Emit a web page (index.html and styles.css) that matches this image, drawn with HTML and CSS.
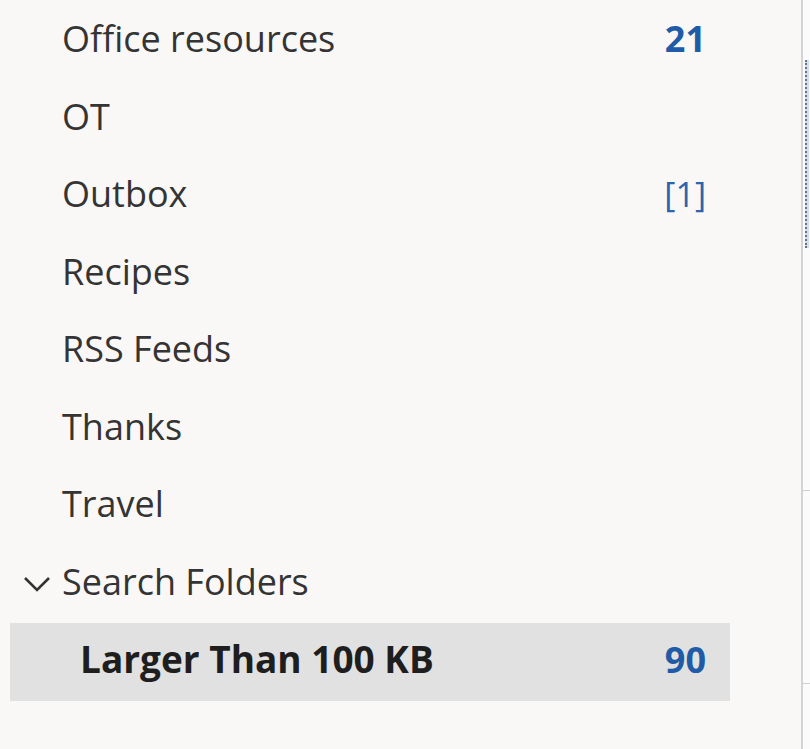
FILE: index.html
```html
<!DOCTYPE html>
<html lang="en">
<head>
<meta charset="utf-8">
<title>Folders</title>
<link rel="stylesheet" href="styles.css">
</head>
<body>
<div class="app">
  <nav class="pane">
    <ul class="folders">
      <li class="row"><span class="name">Office resources</span><span class="count bold">21</span></li>
      <li class="row"><span class="name">OT</span></li>
      <li class="row"><span class="name">Outbox</span><span class="count">[1]</span></li>
      <li class="row"><span class="name">Recipes</span></li>
      <li class="row"><span class="name">RSS Feeds</span></li>
      <li class="row"><span class="name">Thanks</span></li>
      <li class="row"><span class="name">Travel</span></li>
      <li class="row group">
        <svg class="chev" viewBox="0 0 28 16" width="28" height="16"><path d="M2 2 L14 14 L26 2" fill="none" stroke="#333" stroke-width="2.6"/></svg>
        <span class="name">Search Folders</span>
      </li>
      <li class="row selected"><span class="name">Larger Than 100 KB</span><span class="count bold">90</span></li>
    </ul>
  </nav>
  <div class="rail">
    <div class="thumb"></div>
    <div class="tick t1"></div>
    <div class="tick t2"></div>
  </div>
</div>
</body>
</html>
```
FILE: styles.css
```css
html, body {
  margin: 0;
  padding: 0;
  background: #f9f8f7;
}
.app {
  display: flex;
  width: 810px;
  height: 749px;
  overflow: hidden;
}
.pane {
  width: 801px;
  border-right: 2px solid #d4d4d4;
  flex: none;
}
.folders {
  list-style: none;
  margin: 0;
  padding: 0;
  width: 730px;
}
.row {
  display: flex;
  align-items: baseline;
  height: 77.5px;
  line-height: 77.5px;
  padding-left: 62px;
  padding-right: 24px;
  font-family: "Open Sans", "Noto Sans", sans-serif;
  font-size: 36px;
  color: #343434;
}
.name {
  flex: 1;
  white-space: nowrap;
}
.count {
  color: #2a65ad;
  font-size: 34px;
  font-weight: 400;
}
.count.bold {
  font-weight: 700;
  font-size: 36px;
  color: #1f5ba6;
}
.group {
  position: relative;
}
.chev {
  position: absolute;
  left: 23px;
  top: 33px;
}
.selected {
  margin-top: 3px;
  margin-left: 10px;
  padding-left: 70px;
  line-height: 71px;
  background: #e1e1e1;
  font-weight: 700;
  font-size: 37px;
  color: #1e1e1e;
}
.rail {
  flex: 1;
  position: relative;
  background: #fbfbfb;
}
.thumb {
  position: absolute;
  left: 2px;
  top: 60px;
  width: 2px;
  height: 188px;
  border-left: 2px dotted #6a7480;
  background: #cfe0f0;
}
.tick {
  position: absolute;
  left: 0;
  right: 0;
  height: 1px;
  background: #d0d0d0;
}
.t1 { top: 490px; }
.t2 { top: 683px; }
```
